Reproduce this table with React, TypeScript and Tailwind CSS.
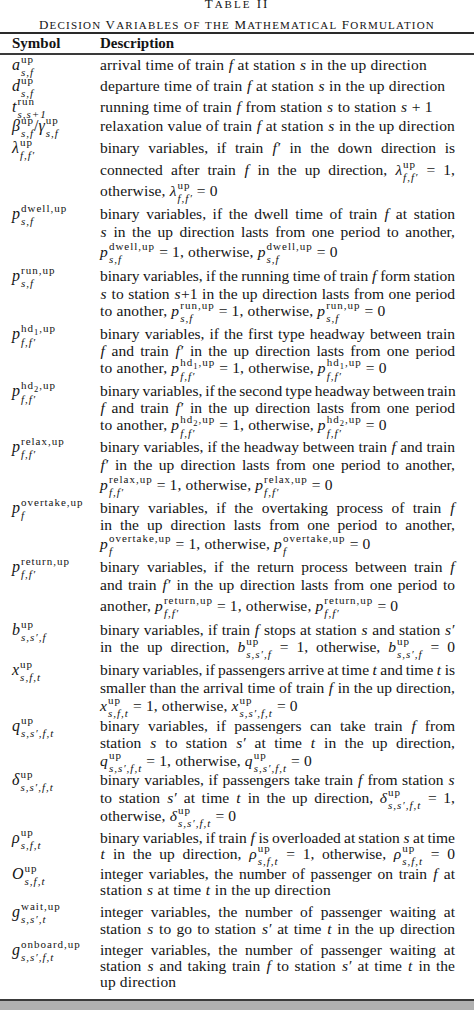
import type { ReactNode } from 'react';

// italic math variable
const V = ({ children }: { children: ReactNode }) => <i className="px-[0.5px]">{children}</i>;

// symbol with stacked super- and subscript
const S = ({ b, sup, sub }: { b: ReactNode; sup: ReactNode; sub: ReactNode }) => (
  <span className="whitespace-nowrap">
    <i>{b}</i>
    <span className="-my-[11px] ml-[1px] inline-flex flex-col items-start align-[7.5px] text-[11px] leading-[13px] tracking-[1px]">
      <span>{sup}</span>
      <i>{sub}</i>
    </span>
  </span>
);

const hd = (n: string) => (
  <>
    hd<span className="relative top-[3px] text-[8.5px]">{n}</span>,up
  </>
);

// small caps caption text: big initial letters, smaller rest
const Caps = ({ words }: { words: [string, string][] }) => (
  <>
    {words.map(([big, small], i) => (
      <span key={i}>
        {i > 0 && ' '}
        <span className="text-[13px]">{big}</span>
        <span className="text-[11px]">{small}</span>
      </span>
    ))}
  </>
);

type Line = { h: string; c: ReactNode; j?: boolean };
type Row = { sym: ReactNode; lines: Line[] };

const rows: Row[] = [
  {
    sym: <S b="a" sup="up" sub="s,f" />,
    lines: [{ h: 'h-[21px]', c: <>arrival time of train <V>f</V> at station <V>s</V> in the up direction</> }],
  },
  {
    sym: <S b="d" sup="up" sub="s,f" />,
    lines: [{ h: 'h-[21px]', c: <>departure time of train <V>f</V> at station <V>s</V> in the up direction</> }],
  },
  {
    sym: <S b="t" sup="run" sub="s,s+1" />,
    lines: [{ h: 'h-[19px]', c: <>running time of train <V>f</V> from station <V>s</V> to station <V>s</V> + 1</> }],
  },
  {
    sym: (
      <>
        <S b="β" sup="up" sub="s,f" />/<S b="γ" sup="up" sub="s,f" />
      </>
    ),
    lines: [{ h: 'h-[22px]', c: <>relaxation value of train <V>f</V> at station <V>s</V> in the up direction</> }],
  },
  {
    sym: <S b="λ" sup="up" sub="f,f′" />,
    lines: [
      { h: 'h-[22px]', j: true, c: <>binary variables, if train <V>f′</V> in the down direction is</> },
      { h: 'h-[21px]', j: true, c: <>connected after train <V>f</V> in the up direction, <S b="λ" sup="up" sub="f,f′" /> = 1,</> },
      { h: 'h-[23px]', c: <>otherwise, <S b="λ" sup="up" sub="f,f′" /> = 0</> },
    ],
  },
  {
    sym: <S b="p" sup="dwell,up" sub="s,f" />,
    lines: [
      { h: 'h-[18px]', j: true, c: <>binary variables, if the dwell time of train <V>f</V> at station</> },
      { h: 'h-[20px]', j: true, c: <><V>s</V> in the up direction lasts from one period to another,</> },
      { h: 'h-[24px]', c: <><S b="p" sup="dwell,up" sub="s,f" /> = 1, otherwise, <S b="p" sup="dwell,up" sub="s,f" /> = 0</> },
    ],
  },
  {
    sym: <S b="p" sup="run,up" sub="s,f" />,
    lines: [
      { h: 'h-[18px]', j: true, c: <>binary variables, if the running time of train <V>f</V> form station</> },
      { h: 'h-[17px]', j: true, c: <><V>s</V> to station <V>s</V>+1 in the up direction lasts from one period</> },
      { h: 'h-[23px]', c: <>to another, <S b="p" sup="run,up" sub="s,f" /> = 1, otherwise, <S b="p" sup="run,up" sub="s,f" /> = 0</> },
    ],
  },
  {
    sym: <S b="p" sup={hd('1')} sub="f,f′" />,
    lines: [
      { h: 'h-[17px]', j: true, c: <>binary variables, if the first type headway between train</> },
      { h: 'h-[17px]', j: true, c: <><V>f</V> and train <V>f′</V> in the up direction lasts from one period</> },
      { h: 'h-[23px]', c: <>to another, <S b="p" sup={hd('1')} sub="f,f′" /> = 1, otherwise, <S b="p" sup={hd('1')} sub="f,f′" /> = 0</> },
    ],
  },
  {
    sym: <S b="p" sup={hd('2')} sub="f,f′" />,
    lines: [
      { h: 'h-[17px]', j: true, c: <>binary variables, if the second type headway between train</> },
      { h: 'h-[17px]', j: true, c: <><V>f</V> and train <V>f′</V> in the up direction lasts from one period</> },
      { h: 'h-[22px]', c: <>to another, <S b="p" sup={hd('2')} sub="f,f′" /> = 1, otherwise, <S b="p" sup={hd('2')} sub="f,f′" /> = 0</> },
    ],
  },
  {
    sym: <S b="p" sup="relax,up" sub="f,f′" />,
    lines: [
      { h: 'h-[18px]', j: true, c: <>binary variables, if the headway between train <V>f</V> and train</> },
      { h: 'h-[20px]', j: true, c: <><V>f′</V> in the up direction lasts from one period to another,</> },
      { h: 'h-[23px]', c: <><S b="p" sup="relax,up" sub="f,f′" /> = 1, otherwise, <S b="p" sup="relax,up" sub="f,f′" /> = 0</> },
    ],
  },
  {
    sym: <S b="p" sup="overtake,up" sub="f" />,
    lines: [
      { h: 'h-[17px]', j: true, c: <>binary variables, if the overtaking process of train <V>f</V></> },
      { h: 'h-[19px]', j: true, c: <>in the up direction lasts from one period to another,</> },
      { h: 'h-[23px]', c: <><S b="p" sup="overtake,up" sub="f" /> = 1, otherwise, <S b="p" sup="overtake,up" sub="f" /> = 0</> },
    ],
  },
  {
    sym: <S b="p" sup="return,up" sub="f,f′" />,
    lines: [
      { h: 'h-[18px]', j: true, c: <>binary variables, if the return process between train <V>f</V></> },
      { h: 'h-[21px]', j: true, c: <>and train <V>f′</V> in the up direction lasts from one period to</> },
      { h: 'h-[24px]', c: <>another, <S b="p" sup="return,up" sub="f,f′" /> = 1, otherwise, <S b="p" sup="return,up" sub="f,f′" /> = 0</> },
    ],
  },
  {
    sym: <S b="b" sup="up" sub="s,s′,f" />,
    lines: [
      { h: 'h-[17px]', j: true, c: <>binary variables, if train <V>f</V> stops at station <V>s</V> and station <V>s′</V></> },
      { h: 'h-[23px]', j: true, c: <>in the up direction, <S b="b" sup="up" sub="s,s′,f" /> = 1, otherwise, <S b="b" sup="up" sub="s,s′,f" /> = 0</> },
    ],
  },
  {
    sym: <S b="x" sup="up" sub="s,f,t" />,
    lines: [
      { h: 'h-[18px]', j: true, c: <>binary variables, if passengers arrive at time <V>t</V> and time <V>t</V> is</> },
      { h: 'h-[18px]', j: true, c: <>smaller than the arrival time of train <V>f</V> in the up direction,</> },
      { h: 'h-[20px]', c: <><S b="x" sup="up" sub="s,f,t" /> = 1, otherwise, <S b="x" sup="up" sub="s,s′,f,t" /> = 0</> },
    ],
  },
  {
    sym: <S b="q" sup="up" sub="s,s′,f,t" />,
    lines: [
      { h: 'h-[17px]', j: true, c: <>binary variables, if passengers can take train <V>f</V> from</> },
      { h: 'h-[18px]', j: true, c: <>station <V>s</V> to station <V>s′</V> at time <V>t</V> in the up direction,</> },
      { h: 'h-[19px]', c: <><S b="q" sup="up" sub="s,s′,f,t" /> = 1, otherwise, <S b="q" sup="up" sub="s,s′,f,t" /> = 0</> },
    ],
  },
  {
    sym: <S b="δ" sup="up" sub="s,s′,f,t" />,
    lines: [
      { h: 'h-[18px]', j: true, c: <>binary variables, if passengers take train <V>f</V> from station <V>s</V></> },
      { h: 'h-[18px]', j: true, c: <>to station <V>s′</V> at time <V>t</V> in the up direction, <S b="δ" sup="up" sub="s,s′,f,t" /> = 1,</> },
      { h: 'h-[22px]', c: <>otherwise, <S b="δ" sup="up" sub="s,s′,f,t" /> = 0</> },
    ],
  },
  {
    sym: <S b="ρ" sup="up" sub="s,f,t" />,
    lines: [
      { h: 'h-[16px]', j: true, c: <>binary variables, if train <V>f</V> is overloaded at station <V>s</V> at time</> },
      { h: 'h-[20px]', j: true, c: <><V>t</V> in the up direction, <S b="ρ" sup="up" sub="s,f,t" /> = 1, otherwise, <S b="ρ" sup="up" sub="s,f,t" /> = 0</> },
    ],
  },
  {
    sym: <S b="O" sup="up" sub="s,f,t" />,
    lines: [
      { h: 'h-[16px]', j: true, c: <>integer variables, the number of passenger on train <V>f</V> at</> },
      { h: 'h-[22px]', c: <>station <V>s</V> at time <V>t</V> in the up direction</> },
    ],
  },
  {
    sym: <S b="g" sup="wait,up" sub="s,s′,t" />,
    lines: [
      { h: 'h-[17px]', j: true, c: <>integer variables, the number of passenger waiting at</> },
      { h: 'h-[21px]', j: true, c: <>station <V>s</V> to go to station <V>s′</V> at time <V>t</V> in the up direction</> },
    ],
  },
  {
    sym: <S b="g" sup="onboard,up" sub="s,s′,f,t" />,
    lines: [
      { h: 'h-[16px]', j: true, c: <>integer variables, the number of passenger waiting at</> },
      { h: 'h-[16px]', j: true, c: <>station <V>s</V> and taking train <V>f</V> to station <V>s′</V> at time <V>t</V> in the</> },
      { h: 'h-[26px]', c: <>up direction</> },
    ],
  },
];

export default function App() {
  return (
    <div className="h-[1010px] w-[474px] overflow-hidden bg-white text-[#141414] [font-family:'Liberation_Serif',serif]">
      {/* caption */}
      <div className="-mt-[3px] h-[13px] text-center text-[13px] leading-[13px] tracking-[2px]">
        <Caps words={[['T', 'ABLE'], ['II', '']]} />
      </div>
      <div className="h-[22px] pt-[8px] text-center text-[13px] leading-[13px] tracking-[1.2px]">
        <Caps
          words={[
            ['D', 'ECISION'],
            ['V', 'ARIABLES'],
            ['', 'OF'],
            ['', 'THE'],
            ['M', 'ATHEMATICAL'],
            ['F', 'ORMULATION'],
          ]}
        />
      </div>

      <div className="h-[2px] bg-[#2a2a2a]" />

      {/* header */}
      <div className="flex h-[19px] pt-[1px] text-[15px] font-bold leading-[17px]">
        <div className="w-[100px] shrink-0 pl-[12px]">Symbol</div>
        <div>Description</div>
      </div>
      <div className="h-[2px] bg-[#3a3a3a]" />

      {/* body */}
      <div className="pt-[1px] text-[15.5px] leading-[17px]">
        {rows.map((row, i) => (
          <div key={i} className="flex">
            <div className="w-[100px] shrink-0 whitespace-nowrap pl-[12px] text-[16px]">{row.sym}</div>
            <div className="w-[355px]">
              {row.lines.map((line, k) => (
                <div
                  key={k}
                  className={`${line.h} whitespace-nowrap ${
                    line.j ? 'text-justify [text-align-last:justify] [word-spacing:-1px]' : 'text-left tracking-[0.15px]'
                  }`}
                >
                  {line.c}
                </div>
              ))}
            </div>
          </div>
        ))}
      </div>

      <div className="h-[2px] bg-[#3a3a3a]" />
      <div className="h-[10px] bg-[#b0b0b0]" />
    </div>
  );
}
